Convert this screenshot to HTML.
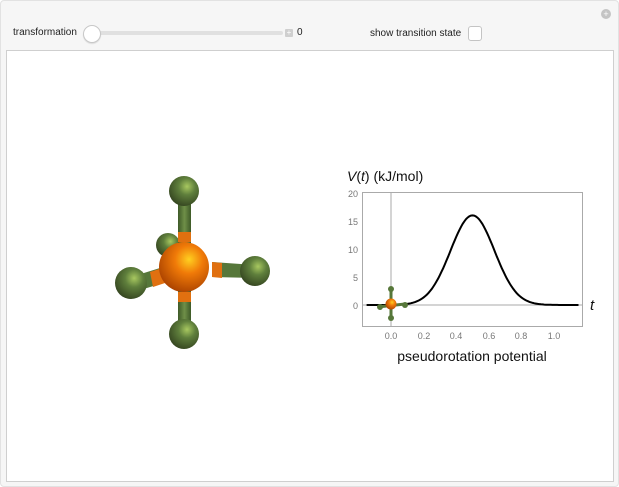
<!DOCTYPE html>
<html><head><meta charset="utf-8"><style>
body{margin:0;width:619px;height:487px;background:#fff;font-family:"Liberation Sans",sans-serif;overflow:hidden}
.outer{position:absolute;left:0;top:0;width:617px;height:485px;background:#f6f6f6;border:1px solid #e2e2e2;border-radius:4px}
.inner{position:absolute;left:6px;top:50px;width:606px;height:430px;background:#fff;border:1px solid #cfcfcf}
.lbl{position:absolute;font-size:10px;color:#222}
</style></head><body>
<div class="outer"></div>
<div class="lbl" style="left:13px;top:27px">transformation</div>
<div style="position:absolute;left:88px;top:31px;width:195px;height:4px;background:#e0e0e0;border-radius:2px"></div>
<div style="position:absolute;left:83px;top:25px;width:16px;height:16px;border-radius:50%;background:#fff;border:1px solid #c8c8c8;box-shadow:0 1px 1px rgba(0,0,0,.1)"></div>
<div style="position:absolute;left:285px;top:29px;width:8px;height:8px;background:#cfcfcf;border-radius:1px;color:#fff;font-size:8px;line-height:8px;text-align:center">+</div>
<div class="lbl" style="left:297px;top:27px">0</div>
<div class="lbl" style="left:370px;top:28px">show transition state</div>
<div style="position:absolute;left:468px;top:26px;width:12px;height:13px;background:#fff;border:1px solid #c4c4c4;border-radius:3px"></div>
<div style="position:absolute;left:601px;top:9px;width:10px;height:10px;border-radius:50%;background:#c4c4c4;color:#fff;font-size:9px;line-height:10px;text-align:center">+</div>
<div class="inner"></div>
<svg width="619" height="487" style="position:absolute;left:0;top:0">
<defs>
<radialGradient id="g" cx="0.6" cy="0.35" r="0.7"><stop offset="0" stop-color="#a8c860"/><stop offset="0.4" stop-color="#5f7f3c"/><stop offset="1" stop-color="#33431f"/></radialGradient>
<radialGradient id="o" cx="0.6" cy="0.35" r="0.7"><stop offset="0" stop-color="#ffd020"/><stop offset="0.4" stop-color="#f07a08"/><stop offset="1" stop-color="#a84000"/></radialGradient>
<linearGradient id="bv" x1="0" x2="1"><stop offset="0" stop-color="#3e5a28"/><stop offset=".5" stop-color="#6f8f48"/><stop offset="1" stop-color="#3e5a28"/></linearGradient>
</defs>
<!-- molecule -->
<circle cx="168" cy="245" r="12" fill="url(#g)"/>
<rect x="178" y="195" width="13" height="52" fill="url(#bv)"/>
<rect x="178" y="232" width="13" height="10" fill="#e07010"/>
<rect x="178" y="290" width="13" height="45" fill="url(#bv)"/>
<rect x="178" y="292" width="13" height="10" fill="#e07010"/>
<polygon points="131,277 160,268 163,283 134,292" fill="#56773a"/>
<polygon points="150,272 162,268 165,283 153,287" fill="#e07010"/>
<polygon points="212,262 255,265 255,278 212,277" fill="#56773a"/>
<polygon points="212,262 222,263 222,278 212,277" fill="#e07010"/>
<circle cx="184" cy="267" r="25" fill="url(#o)"/>
<circle cx="184" cy="191" r="15" fill="url(#g)"/>
<circle cx="184" cy="334" r="15" fill="url(#g)"/>
<circle cx="131" cy="283" r="16" fill="url(#g)"/>
<circle cx="255" cy="271" r="15" fill="url(#g)"/>
<!-- plot -->
<text x="347" y="181" font-size="14" fill="#111"><tspan font-style="italic">V</tspan>(<tspan font-style="italic">t</tspan>) (kJ/mol)</text>
<rect x="362.5" y="192.5" width="220" height="134" fill="none" stroke="#aaa"/>
<line x1="391" y1="193" x2="391" y2="326" stroke="#aaa"/>
<line x1="362" y1="305" x2="582" y2="305" stroke="#aaa"/>
<g font-size="9" fill="#777" text-anchor="end">
<text x="358" y="197">20</text><text x="358" y="225">15</text><text x="358" y="253">10</text><text x="358" y="281">5</text><text x="358" y="309">0</text>
</g>
<g font-size="9" fill="#777" text-anchor="middle">
<text x="391" y="339">0.0</text><text x="424" y="339">0.2</text><text x="456" y="339">0.4</text><text x="489" y="339">0.6</text><text x="521" y="339">0.8</text><text x="554" y="339">1.0</text>
</g>
<path id="curve" fill="none" stroke="#000" stroke-width="2"/>
<text x="590" y="310" font-size="15" font-style="italic" fill="#111">t</text>
<text x="472" y="361" font-size="14" fill="#111" text-anchor="middle">pseudorotation potential</text>
<g>
<rect x="389.5" y="289" width="3" height="30" fill="#56773a"/>
<line x1="378" y1="307" x2="405" y2="304" stroke="#56773a" stroke-width="3"/>
<circle cx="391" cy="289" r="3" fill="#56773a"/><circle cx="391" cy="318" r="3" fill="#56773a"/>
<circle cx="380" cy="307" r="3" fill="#56773a"/><circle cx="405" cy="305" r="3" fill="#56773a"/>
<circle cx="391" cy="304" r="5.5" fill="url(#o)"/>
</g>
</svg>
<script>
var d="";for(var i=0;i<=130;i++){var t=-0.15+i*0.01;var v=16*Math.exp(-Math.pow(t-0.5,2)/(2*0.135*0.135));var x=391+163*t,y=305-5.6*v;d+=(i?"L":"M")+x.toFixed(1)+","+y.toFixed(1);}
document.getElementById("curve").setAttribute("d",d);
</script>
</body></html>
